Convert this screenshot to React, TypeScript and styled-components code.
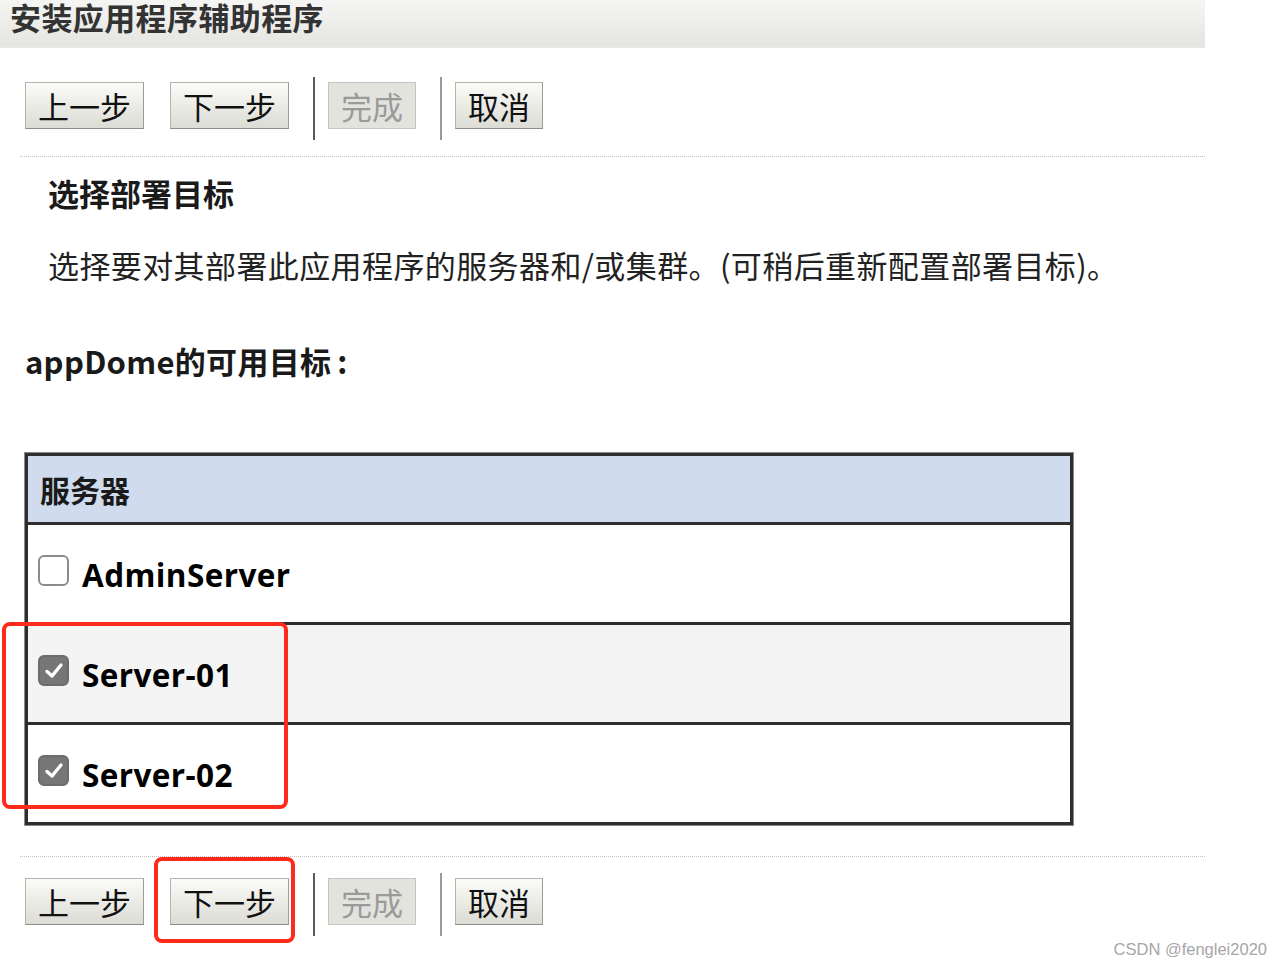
import React from 'react';
import styled, { createGlobalStyle } from 'styled-components';

const GlobalStyle = createGlobalStyle`
  body {
    margin: 0;
    background: #ffffff;
    font-family: "Noto Sans CJK SC", "Noto Sans", sans-serif;
    color: #1a1a1a;
  }
`;

const Page = styled.div`
  position: relative;
  width: 1282px;
  height: 970px;
  overflow: hidden;
`;

const Content = styled.div`
  width: 1205px;
`;

const TitleBar = styled.div`
  height: 47px;
  background: linear-gradient(#f5f5f3, #e4e4e1);
  border-bottom: 1px solid #e9e9e6;
  padding-left: 10px;
`;

const Title = styled.h1`
  margin: 0;
  font-size: 31px;
  line-height: 34px;
  font-weight: 700;
  letter-spacing: 0.4px;
  color: #333;
`;

const Toolbar = styled.div<{ $top: number }>`
  display: flex;
  align-items: flex-start;
  height: 63px;
  margin: ${p => p.$top}px 0 0 25px;
`;

const Button = styled.button<{ $gapRight?: number }>`
  height: 47px;
  padding: 0 12px;
  margin: 5px ${p => p.$gapRight ?? 0}px 0 0;
  font-family: "Noto Sans CJK SC", sans-serif;
  font-size: 31px;
  line-height: 1;
  color: #111;
  background: linear-gradient(#fbfbf8, #dcdcd5);
  border: 1px solid #b4b4ae;
  border-bottom-color: #8e8e88;
  border-right-color: #9c9c96;
  border-radius: 0;
  &:disabled {
    color: #9a9a9a;
    background: #e3e3de;
    border-color: #c4c4c0;
  }
`;

const Separator = styled.div<{ $tone: string }>`
  width: 2px;
  height: 63px;
  margin: 0 13px 0 24px;
  background: ${p => p.$tone};
`;

const DottedRule = styled.div<{ $top: number }>`
  margin: ${p => p.$top}px 0 0 20px;
  border-top: 1px dotted #c2c2c2;
`;

const SectionTitle = styled.h2`
  margin: 16px 0 0 48px;
  font-size: 31px;
  line-height: 40px;
  font-weight: 700;
`;

const Description = styled.p`
  margin: 32px 0 0 48px;
  font-size: 31px;
  line-height: 40px;
  font-weight: 400;
  letter-spacing: 0.4px;
  color: #222;
  white-space: nowrap;
`;

const TargetsTitle = styled.h3`
  margin: 56px 0 0 25px;
  font-size: 31px;
  line-height: 40px;
  font-weight: 700;
  letter-spacing: 0.3px;
`;

const Colon = styled.span`
  margin-left: 6px;
`;

const Table = styled.div`
  margin: 72px 0 0 25px;
  width: 1042px;
  border: 3px solid #2e2e2e;
  box-shadow: 0 0 0 1px #8a8a8a;
`;

const HeaderCell = styled.div`
  height: 66px;
  display: flex;
  align-items: center;
  padding-left: 12px;
  background: #d0dbed;
  border-bottom: 3px solid #2e2e2e;
  font-size: 30px;
  font-weight: 700;
`;

const Row = styled.div<{ $alt?: boolean; $last?: boolean }>`
  height: 97px;
  display: flex;
  align-items: center;
  gap: 13px;
  padding-left: 10px;
  background: ${p => (p.$alt ? '#f4f4f4' : '#ffffff')};
  border-bottom: ${p => (p.$last ? 'none' : '3px solid #2e2e2e')};
`;

const Box = styled.span<{ $checked?: boolean }>`
  width: 31px;
  height: 31px;
  box-sizing: border-box;
  border-radius: 6px;
  display: inline-flex;
  align-items: center;
  justify-content: center;
  margin-top: -6px;
  background: ${p => (p.$checked ? '#767676' : '#ffffff')};
  border: 2px solid ${p => (p.$checked ? '#6c6c6c' : '#8c8c8c')};
`;

const ServerName = styled.span`
  font-family: "Open Sans", "Noto Sans", sans-serif;
  font-size: 31.5px;
  font-weight: 700;
  color: #000;
  letter-spacing: 0.4px;
  margin-top: 2px;
`;

const Mark = styled.div`
  position: absolute;
  border: 4px solid #ff2a1b;
  border-radius: 8px;
  box-sizing: border-box;
  pointer-events: none;
`;

const Watermark = styled.div`
  position: absolute;
  right: 15px;
  top: 940px;
  font-family: "Liberation Sans", Arial, sans-serif;
  font-size: 16.5px;
  color: #a6a6a6;
`;

const Check = () => (
  <svg width="22" height="22" viewBox="0 0 22 22">
    <path d="M4 11.5 L9 16 L18 5" fill="none" stroke="#fff" strokeWidth="3.4" strokeLinecap="round" strokeLinejoin="round" />
  </svg>
);

const Buttons = ({ top }: { top: number }) => (
  <Toolbar $top={top}>
    <Button $gapRight={26}>上一步</Button>
    <Button>下一步</Button>
    <Separator $tone="#5a5a5a" />
    <Button disabled>完成</Button>
    <Separator $tone="#9a9a9a" />
    <Button>取消</Button>
  </Toolbar>
);

const servers = [
  { name: 'AdminServer', checked: false },
  { name: 'Server-01', checked: true },
  { name: 'Server-02', checked: true },
];

export default function App() {
  return (
    <Page>
      <GlobalStyle />
      <Content>
        <TitleBar>
          <Title>安装应用程序辅助程序</Title>
        </TitleBar>
        <Buttons top={29} />
        <DottedRule $top={16} />
        <SectionTitle>选择部署目标</SectionTitle>
        <Description>选择要对其部署此应用程序的服务器和/或集群。(可稍后重新配置部署目标)。</Description>
        <TargetsTitle>
          appDome的可用目标<Colon>:</Colon>
        </TargetsTitle>
        <Table>
          <HeaderCell>服务器</HeaderCell>
          {servers.map((s, i) => (
            <Row key={s.name} $alt={i === 1} $last={i === servers.length - 1}>
              <Box $checked={s.checked}>{s.checked && <Check />}</Box>
              <ServerName>{s.name}</ServerName>
            </Row>
          ))}
        </Table>
        <DottedRule $top={31} />
        <Buttons top={16} />
      </Content>
      <Mark style={{ left: 2, top: 622, width: 286, height: 187 }} />
      <Mark style={{ left: 154, top: 857, width: 141, height: 86 }} />
      <Watermark>CSDN @fenglei2020</Watermark>
    </Page>
  );
}
